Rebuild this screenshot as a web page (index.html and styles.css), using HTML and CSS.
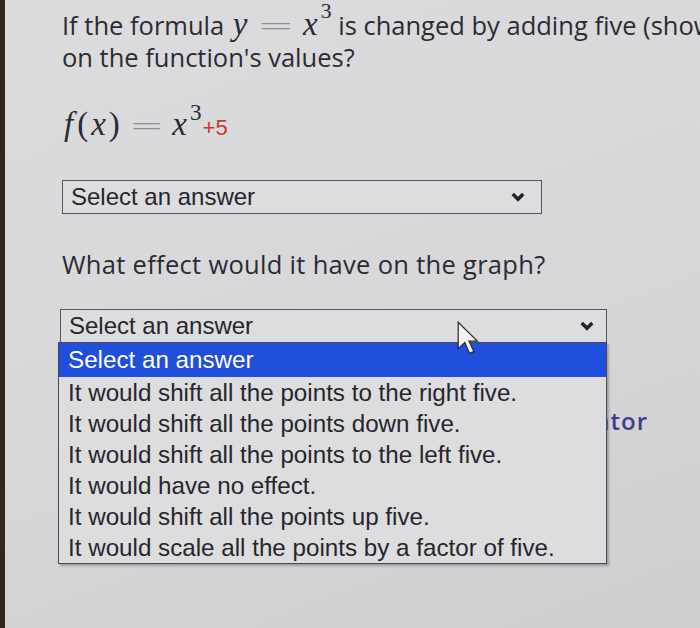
FILE: index.html
```html
<!DOCTYPE html>
<html>
<head>
<meta charset="utf-8">
<link rel="stylesheet" href="styles.css">
</head>
<body>
<div class="screen">
  <div class="content">
    <p class="q">If the formula <span class="m my">y</span><span class="eq">=</span><span class="m mx">x</span><sup class="sup">3</sup> is changed by adding five (shown in red), what effect would it have<br>on the function's values?</p>
    <p class="formula"><span class="m mf">f</span>(<span class="m mx">x</span>)<span class="eq">=</span><span class="m mx">x</span><sup class="sup">3</sup><span class="red">+5</span></p>
    <div class="select sel1"><span>Select an answer</span><svg class="chev" viewBox="0 0 12 8"><path d="M1.5 1.5 L6 6 L10.5 1.5" /></svg></div>
    <p class="q q2">What effect would it have on the graph?</p>
    <div class="selwrap">
      <div class="select sel2"><span>Select an answer</span><svg class="chev" viewBox="0 0 12 8"><path d="M1.5 1.5 L6 6 L10.5 1.5" /></svg></div>
      <ul class="list">
        <li class="hl">Select an answer</li>
        <li>It would shift all the points to the right five.</li>
        <li>It would shift all the points down five.</li>
        <li>It would shift all the points to the left five.</li>
        <li>It would have no effect.</li>
        <li>It would shift all the points up five.</li>
        <li>It would scale all the points by a factor of five.</li>
      </ul>
      <svg class="cursor" viewBox="0 0 20 30"><path d="M1 1 L1 23 L6.5 18 L10.5 27 L14 25.5 L10 16.8 L17 16.8 Z" /></svg>
    </div>
    <div class="help"><span class="link">Question Help: Calculator</span></div>
  </div>
</div>
</body>
</html>
```

FILE: styles.css
```css
html, body {
  margin: 0;
  padding: 0;
  height: 100%;
  overflow: hidden;
}
body {
  background: linear-gradient(160deg, #dcdbdd 0%, #d7d6d8 55%, #cfcdd0 100%);
}
.screen {
  border-left: 5px solid #33261e;
  height: 628px;
  box-sizing: border-box;
  overflow: hidden;
}
.content {
  padding: 9px 0 0 57px;
  color: #2b2b34;
  font-family: "Open Sans", "DejaVu Sans", sans-serif;
}
.q {
  margin: 0;
  font-size: 25.5px;
  line-height: 32px;
  white-space: nowrap;
}
.m {
  font-family: "Liberation Serif", serif;
  font-style: italic;
  font-size: 1.3em;
  line-height: 0;
}
.my { margin-left: 2px; }
.mx { margin: 0 1px 0 2px; }
.eq {
  display: inline-block;
  font-family: "DejaVu Sans", sans-serif;
  font-weight: 200;
  color: #8d8d93;
  font-size: 1.1em;
  line-height: 0;
  margin: 0 14px 0 16px;
  transform: scaleX(1.6);
}
.sup {
  font-family: "Liberation Serif", serif;
  font-size: 0.85em;
  line-height: 0;
  vertical-align: 0.8em;
  margin-left: 2px;
}
.formula {
  margin: 33px 0 0;
  font-family: "Liberation Serif", serif;
  font-size: 33px;
  line-height: 36px;
  height: 36px;
  color: #2b2b34;
}
.formula .m { font-size: 1em; }
.formula .mf { margin: 0 4px 0 2px; }
.formula .mx { margin: 0 3px 0 3px; }
.formula .eq { font-size: 0.85em; margin: 0 11px 0 15px; transform: scaleX(1.5); }
.formula .sup { font-size: 0.7em; vertical-align: 0.65em; margin-left: 0; }
.red {
  font-family: "Liberation Sans", sans-serif;
  color: #c23a2c;
  font-size: 22px;
  margin-left: 1px;
}
.select {
  box-sizing: border-box;
  height: 34px;
  border: 1px solid #55555c;
  background: #dddcde;
  display: flex;
  align-items: center;
  justify-content: space-between;
  padding: 0 12px 0 8px;
  font-family: "Liberation Sans", Arial, sans-serif;
  font-size: 24px;
  color: #26262c;
}
.sel1 {
  margin-top: 38px;
  width: 480px;
}
.sel1 .chev { margin-right: 4px; }
.chev {
  width: 14px;
  height: 10px;
  fill: none;
  stroke: #222228;
  stroke-width: 3;
}
.q2 {
  margin-top: 34px;
  letter-spacing: 0.3px;
}
.selwrap {
  position: relative;
  margin: 29px 0 0 -2px;
  width: 547px;
}
.sel2 {
  width: 547px;
}
.list {
  position: absolute;
  left: -2px;
  top: 33px;
  width: 549px;
  margin: 0;
  padding: 0;
  list-style: none;
  box-sizing: border-box;
  border: 1px solid #4a4a50;
  background: #dddcde;
  box-shadow: 2px 2px 2px rgba(0,0,0,0.25);
  font-family: "Liberation Sans", Arial, sans-serif;
  font-size: 24.2px;
  color: #26262c;
  z-index: 2;
}
.list li {
  height: 31px;
  line-height: 31px;
  padding-left: 9px;
  white-space: nowrap;
}
.list li.hl {
  height: 34px;
  line-height: 33px;
  background: #1f4fdc;
  color: #ffffff;
}
.cursor {
  position: absolute;
  left: 397px;
  top: 12px;
  width: 24px;
  height: 36px;
  fill: #f2f2f2;
  stroke: #2a2a30;
  stroke-width: 1;
  z-index: 3;
}
.help {
  margin-top: 63px;
  width: 586px;
  text-align: right;
  font-size: 24px;
  letter-spacing: 1px;
  line-height: 30px;
}
.link {
  color: #3b3d8e;
  font-weight: 600;
}
```
